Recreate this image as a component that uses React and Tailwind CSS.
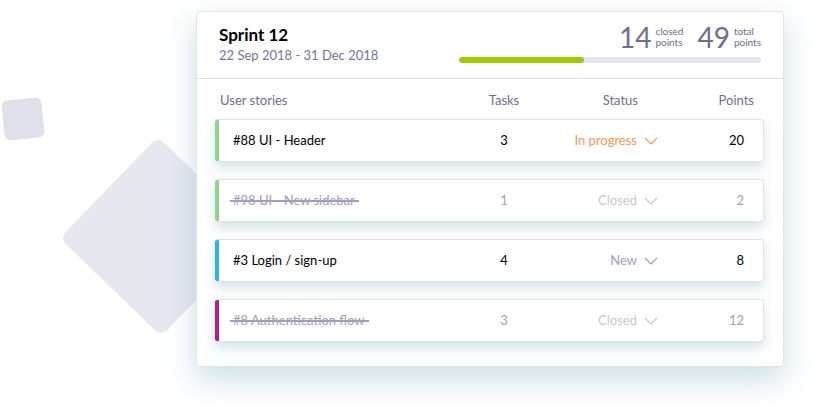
import React from "react";

const rows = [
  { id: "#88 UI - Header", tasks: 3, status: "In progress", points: 20, color: "bg-[#8ed48a]", done: false, statusCls: "text-[#f7975a]", chev: "#f7975a" },
  { id: "#98 UI - New sidebar", tasks: 1, status: "Closed", points: 2, color: "bg-[#8ed48a]", done: true, statusCls: "text-[#c8c8d0]", chev: "#c8c8d0" },
  { id: "#3 Login / sign-up", tasks: 4, status: "New", points: 8, color: "bg-[#2fb0f5]", done: false, statusCls: "text-[#a89cb8]", chev: "#a89cb8" },
  { id: "#8 Authentication flow", tasks: 3, status: "Closed", points: 12, color: "bg-[#b0208e]", done: true, statusCls: "text-[#c8c8d0]", chev: "#c8c8d0" },
];

function Chevron({ color }) {
  return (
    <svg width="14" height="8" viewBox="0 0 14 8" fill="none">
      <path d="M1 1l6 6 6-6" stroke={color} strokeWidth="1.2" />
    </svg>
  );
}

export default function App() {
  return (
    <div
      className="relative w-[815px] h-[419px] bg-white overflow-hidden"
      style={{ fontFamily: "Lato, 'Noto Sans', sans-serif" }}
    >
      <div className="absolute left-[3px] top-[99px] w-[40px] h-[40px] rounded-[6px] bg-[#e0e0ea] rotate-[-6deg]" />
      <div className="absolute left-[89px] top-[166px] w-[141px] h-[141px] rounded-[8px] bg-[#e6e7ef] rotate-[44deg]" />

      <div className="relative ml-[196px] mt-[11px] w-[588px] h-[356px] bg-white border border-[#e2e3ea] rounded-[4px] shadow-[0_12px_30px_rgba(160,195,208,0.55)]">
        <div className="flex justify-between h-[67px] border-b border-[#e2e3ea] px-[22px]">
          <div className="pt-[12px]">
            <div className="text-[17px] font-bold text-black leading-[22px]">Sprint 12</div>
            <div className="text-[13px] text-[#75759a] leading-[18px]">22 Sep 2018 - 31 Dec 2018</div>
          </div>
          <div className="pt-[10px] w-[302px]">
            <div className="flex justify-end items-center gap-[14px] h-[30px] text-[#6e6e8f]">
              <div className="flex items-center gap-[4px]">
                <span className="text-[28px] font-normal leading-none">14</span>
                <div className="flex flex-col text-[10px]">
                  <span className="h-[11px] leading-[11px]">closed</span>
                  <span className="h-[11px] leading-[11px]">points</span>
                </div>
              </div>
              <div className="flex items-center gap-[4px]">
                <span className="text-[28px] font-normal leading-none">49</span>
                <div className="flex flex-col text-[10px]">
                  <span className="h-[11px] leading-[11px]">total</span>
                  <span className="h-[11px] leading-[11px]">points</span>
                </div>
              </div>
            </div>
            <div className="mt-[5px] h-[6px] rounded-full bg-[#e3e5f0] overflow-hidden">
              <div className="h-full w-[125px] bg-[#9ccc0a] rounded-full" />
            </div>
          </div>
        </div>

        <div className="flex items-center h-[40px] pt-[4px] text-[13px] text-[#6e6e8f] pl-[23px]">
          <div className="w-[244px]">User stories</div>
          <div className="w-[80px] text-center">Tasks</div>
          <div className="w-[94px] text-right">Status</div>
          <div className="w-[116px] text-right">Points</div>
        </div>

        <div className="flex flex-col gap-[17px] pl-[18px] pr-[19px]">
          {rows.map((r) => (
            <div
              key={r.id}
              className="flex items-center h-[43px] bg-white border border-[#e0e2ea] border-l-0 rounded-[3px] overflow-hidden shadow-[0_6px_12px_rgba(175,205,215,0.55)] text-[13px]"
            >
              <div className={`w-[4px] h-full ${r.color}`} />
              <div className="w-[245px] pl-[14px]">
                {r.done ? (
                  <span className="relative text-[#a89cb8]">
                    {r.id}
                    <span className="absolute -left-[3px] -right-[4px] top-[52%] h-[1.5px] bg-[#a89cb8]" />
                  </span>
                ) : (
                  <span className="text-black">{r.id}</span>
                )}
              </div>
              <div className={`w-[80px] text-center ${r.done ? "text-[#a89cb8]" : "text-black"}`}>{r.tasks}</div>
              <div className="flex items-center justify-end w-[114px] gap-[7px]">
                <span className={r.statusCls}>{r.status}</span>
                <Chevron color={r.chev} />
              </div>
              <div className={`flex-1 text-right pr-[19px] ${r.done ? "text-[#a89cb8]" : "text-black"}`}>{r.points}</div>
            </div>
          ))}
        </div>
      </div>
    </div>
  );
}
